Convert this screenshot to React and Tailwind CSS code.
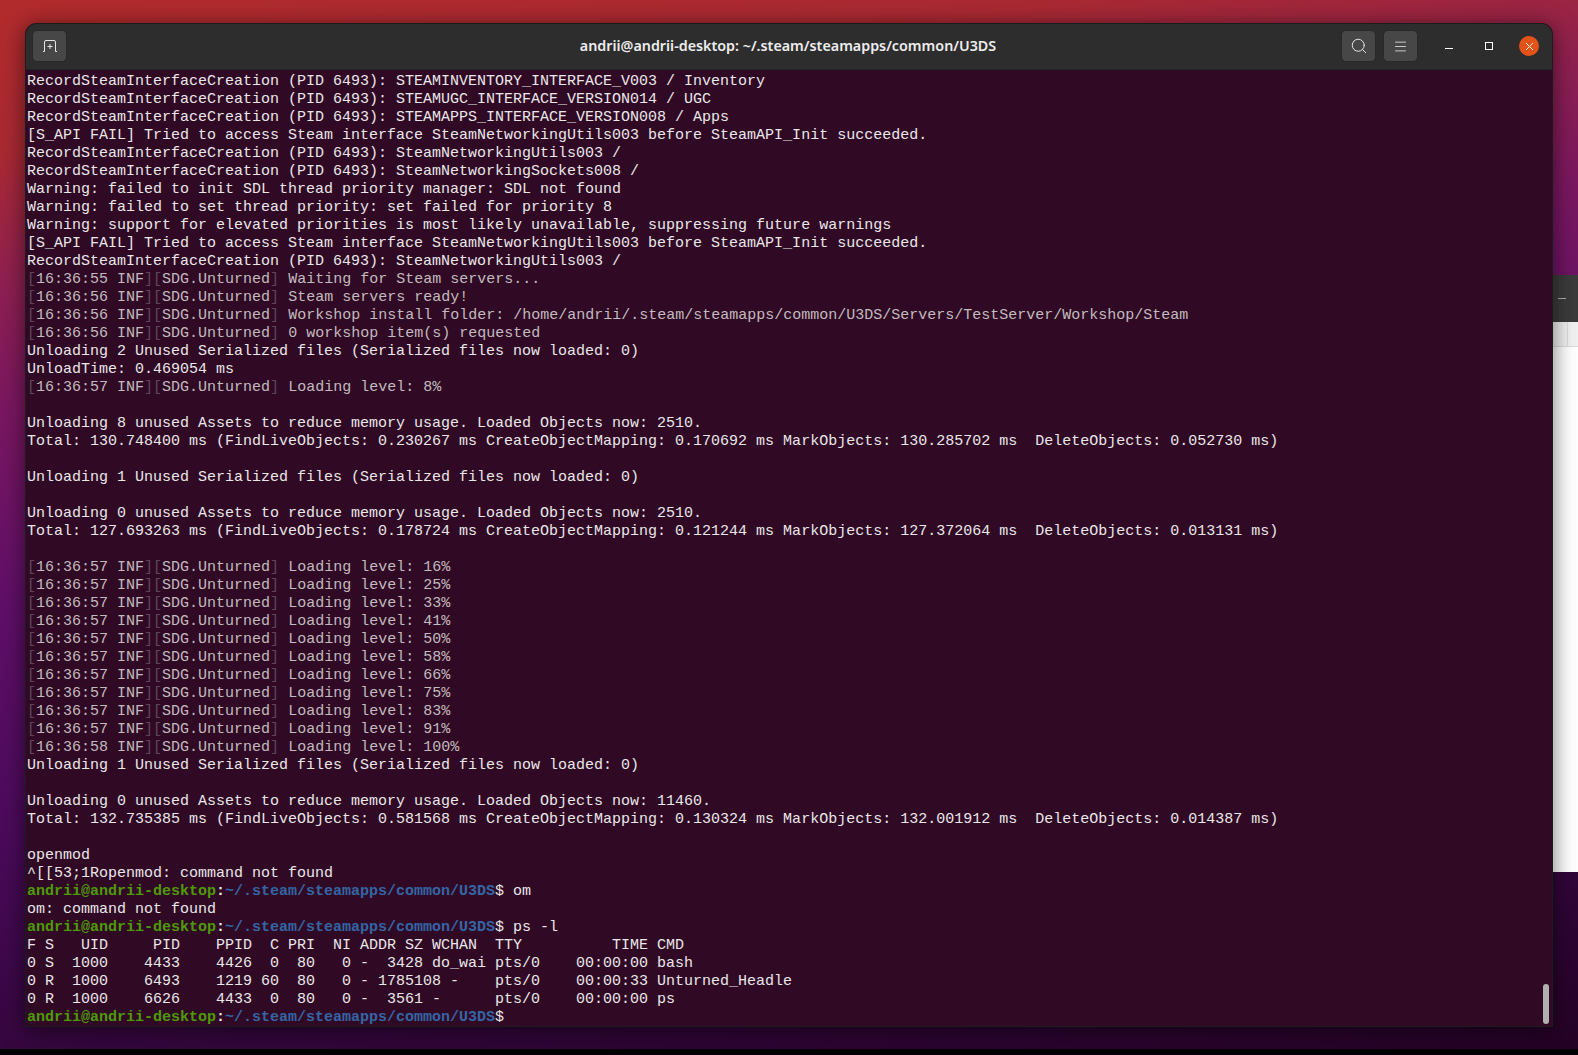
import { Search, Menu, X } from 'lucide-react'

const steam = (s) => `RecordSteamInterfaceCreation (PID 6493): ${s}`
const promptPath = '~/.steam/steamapps/common/U3DS'

// output of the terminal, one entry per row
const rows = [
  steam('STEAMINVENTORY_INTERFACE_V003 / Inventory'),
  steam('STEAMUGC_INTERFACE_VERSION014 / UGC'),
  steam('STEAMAPPS_INTERFACE_VERSION008 / Apps'),
  '[S_API FAIL] Tried to access Steam interface SteamNetworkingUtils003 before SteamAPI_Init succeeded.',
  steam('SteamNetworkingUtils003 /'),
  steam('SteamNetworkingSockets008 /'),
  'Warning: failed to init SDL thread priority manager: SDL not found',
  'Warning: failed to set thread priority: set failed for priority 8',
  'Warning: support for elevated priorities is most likely unavailable, suppressing future warnings',
  '[S_API FAIL] Tried to access Steam interface SteamNetworkingUtils003 before SteamAPI_Init succeeded.',
  steam('SteamNetworkingUtils003 /'),
  { time: '16:36:55', msg: 'Waiting for Steam servers...' },
  { time: '16:36:56', msg: 'Steam servers ready!' },
  { time: '16:36:56', msg: 'Workshop install folder: /home/andrii/.steam/steamapps/common/U3DS/Servers/TestServer/Workshop/Steam' },
  { time: '16:36:56', msg: '0 workshop item(s) requested' },
  'Unloading 2 Unused Serialized files (Serialized files now loaded: 0)',
  'UnloadTime: 0.469054 ms',
  { time: '16:36:57', msg: 'Loading level: 8%' },
  '',
  'Unloading 8 unused Assets to reduce memory usage. Loaded Objects now: 2510.',
  'Total: 130.748400 ms (FindLiveObjects: 0.230267 ms CreateObjectMapping: 0.170692 ms MarkObjects: 130.285702 ms  DeleteObjects: 0.052730 ms)',
  '',
  'Unloading 1 Unused Serialized files (Serialized files now loaded: 0)',
  '',
  'Unloading 0 unused Assets to reduce memory usage. Loaded Objects now: 2510.',
  'Total: 127.693263 ms (FindLiveObjects: 0.178724 ms CreateObjectMapping: 0.121244 ms MarkObjects: 127.372064 ms  DeleteObjects: 0.013131 ms)',
  '',
  { time: '16:36:57', msg: 'Loading level: 16%' },
  { time: '16:36:57', msg: 'Loading level: 25%' },
  { time: '16:36:57', msg: 'Loading level: 33%' },
  { time: '16:36:57', msg: 'Loading level: 41%' },
  { time: '16:36:57', msg: 'Loading level: 50%' },
  { time: '16:36:57', msg: 'Loading level: 58%' },
  { time: '16:36:57', msg: 'Loading level: 66%' },
  { time: '16:36:57', msg: 'Loading level: 75%' },
  { time: '16:36:57', msg: 'Loading level: 83%' },
  { time: '16:36:57', msg: 'Loading level: 91%' },
  { time: '16:36:58', msg: 'Loading level: 100%' },
  'Unloading 1 Unused Serialized files (Serialized files now loaded: 0)',
  '',
  'Unloading 0 unused Assets to reduce memory usage. Loaded Objects now: 11460.',
  'Total: 132.735385 ms (FindLiveObjects: 0.581568 ms CreateObjectMapping: 0.130324 ms MarkObjects: 132.001912 ms  DeleteObjects: 0.014387 ms)',
  '',
  'openmod',
  '^[[53;1Ropenmod: command not found',
  { cmd: ' om' },
  'om: command not found',
  { cmd: ' ps -l' },
  'F S   UID     PID    PPID  C PRI  NI ADDR SZ WCHAN  TTY          TIME CMD',
  '0 S  1000    4433    4426  0  80   0 -  3428 do_wai pts/0    00:00:00 bash',
  '0 R  1000    6493    1219 60  80   0 - 1785108 -    pts/0    00:00:33 Unturned_Headle',
  '0 R  1000    6626    4433  0  80   0 -  3561 -      pts/0    00:00:00 ps',
  { cmd: '' },
]

function Row({ row }) {
  if (typeof row === 'string') {
    return <div className="h-[18px]">{row}</div>
  }

  if (row.time) {
    return (
      <div className="h-[18px] text-[#c2babf]">
        <span className="text-[#5f4659]">[</span>
        {row.time} INF
        <span className="text-[#5f4659]">][</span>
        SDG.Unturned
        <span className="text-[#5f4659]">]</span> {row.msg}
      </div>
    )
  }

  return (
    <div className="h-[18px]">
      <span className="font-bold text-[#4e9a06]">andrii@andrii-desktop</span>
      <span className="font-bold">:</span>
      <span className="font-bold text-[#3465a4]">{promptPath}</span>$
      {row.cmd}
    </div>
  )
}

function HeaderButton({ children }) {
  return (
    <button className="flex h-[32px] w-[35px] items-center justify-center rounded-[5px] border border-[#282828] bg-[#474747] text-[#e6e6e6]">
      {children}
    </button>
  )
}

function TabIcon() {
  return (
    <svg width="16" height="14" viewBox="0 0 16 14" fill="none" stroke="currentColor" strokeWidth="1">
      <path d="M1 12.5h1.5V3a1.5 1.5 0 0 1 1.5-1.5h8A1.5 1.5 0 0 1 13.5 3v9.5H15" />
      <path d="M8 5v5M5.5 7.5h5" />
    </svg>
  )
}

function Terminal() {
  return (
    <div className="absolute left-[25px] top-[23px] z-10 flex h-[1004px] w-[1528px] flex-col overflow-hidden rounded-t-[11px] border border-[#1c1c1c] bg-[#300a24] shadow-[0_3px_22px_rgba(0,0,0,0.55)]">
      <header className="grid h-[46px] shrink-0 grid-cols-[1fr_auto_1fr] items-center border-b border-[#232323] bg-[#2d2d2d] pb-[1px] pl-[6px] pr-[13px]">
        <div className="flex">
          <HeaderButton>
            <TabIcon />
          </HeaderButton>
        </div>

        <h1 className="pl-[5px] font-['Noto_Sans',sans-serif] text-[14.3px] font-semibold text-[#ededed]">
          andrii@andrii-desktop: ~/.steam/steamapps/common/U3DS
        </h1>

        <div className="flex items-center justify-end">
          <div className="flex items-center gap-[7px]">
            <HeaderButton>
              <Search size={18} strokeWidth={1.3} />
            </HeaderButton>
            <HeaderButton>
              <Menu size={15} strokeWidth={1.3} />
            </HeaderButton>
          </div>

          <div className="ml-[21px] flex items-center gap-[20px] text-[#eeeeee]">
            <div className="flex w-[20px] justify-center pt-[4px]">
              <div className="h-[1px] w-[8px] bg-white" />
            </div>
            <div className="flex w-[20px] justify-center">
              <div className="h-[8px] w-[8px] border border-white" />
            </div>
            <div className="flex h-[20px] w-[20px] items-center justify-center rounded-full bg-[#e25219] text-white">
              <X size={13} strokeWidth={1.7} />
            </div>
          </div>
        </div>
      </header>

      <div className="relative flex-1 whitespace-pre pl-[1px] pt-[3px] font-['Liberation_Mono',monospace] text-[15px] leading-[18px] text-[#e9e7e9]">
        {rows.map((row, i) => (
          <Row key={i} row={row} />
        ))}
        <div className="absolute bottom-[3px] right-[3px] h-[40px] w-[6px] rounded-full bg-[#b0b0b0]" />
      </div>
    </div>
  )
}

function BackWindow() {
  return (
    <div className="absolute left-[1540px] top-[275px] flex h-[597px] w-[38px] flex-col pl-[13px]">
      <div className="flex h-[47px] items-center bg-[#3b3b3b] pl-[5px]">
        <div className="h-[1px] w-[8px] bg-[#b0b0b0]" />
      </div>
      <div className="flex h-[25px] border-b border-[#dcdcdc] bg-[#f1f1f1]">
        <div className="w-[15px] border-r border-[#dcdcdc]" />
      </div>
      <div className="flex-1 bg-white" />
    </div>
  )
}

export default function App() {
  return (
    <div className="flex h-screen w-full flex-col overflow-hidden bg-black">
      <main className="relative flex-1 bg-[linear-gradient(172deg,#b22b2c_0%,#a92933_12%,#8f2050_22%,#7a1760_32%,#5f0f68_48%,#4a0a5a_66%,#33063c_84%,#240225_100%)]">
        <BackWindow />
        <Terminal />
      </main>
      <div className="h-[6px] shrink-0 bg-black" />
    </div>
  )
}
